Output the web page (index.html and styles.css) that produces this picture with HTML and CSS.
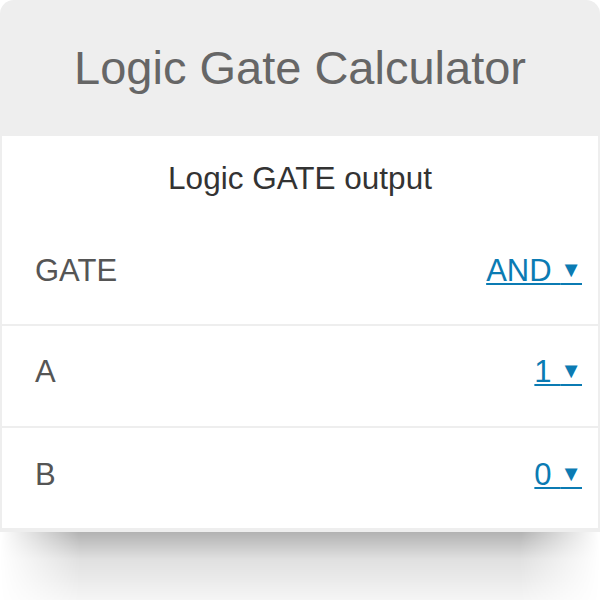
FILE: index.html
```html
<!DOCTYPE html>
<html>

<head>
    <meta charset="UTF-8">
    <title>Logic Gate Calculator</title>
    <link rel="stylesheet" href="styles.css">
</head>

<body>
    <div class="calc">
        <div class="calc-head">Logic Gate Calculator</div>
        <div class="calc-body">
            <div class="caption">Logic GATE output</div>
            <div class="row first">
                <span class="label">GATE</span>
                <a href="javascript:;" class="pick">AND&nbsp;<span class="arrow">▼</span></a>
            </div>
            <div class="row">
                <span class="label">A</span>
                <a href="javascript:;" class="pick">1&nbsp;<span class="arrow">▼</span></a>
            </div>
            <div class="row last">
                <span class="label">B</span>
                <a href="javascript:;" class="pick">0&nbsp;<span class="arrow">▼</span></a>
            </div>
        </div>
    </div>
    <div class="calc-shadow"></div>
</body>

</html>
```

FILE: styles.css
```css
* {
    margin: 0;
    padding: 0;
    list-style: none;
    text-decoration: none;
}

html,
body {
    min-height: 600px;
    background-color: #fff;
}

body {
    font-family: "Liberation Sans", Arial, sans-serif;
}

.calc {
    width: 600px;
    background-color: #eee;
    border-radius: 14px 14px 0 0;
    padding: 0 2px 4px;
    box-sizing: border-box;
}

/* soft shadow under the card */
.calc-shadow {
    height: 68px;
    background: linear-gradient(rgba(0, 0, 0, 0.3), rgba(0, 0, 0, 0.12) 40%, rgba(0, 0, 0, 0.04));
    -webkit-mask-image: linear-gradient(to right, transparent, #000 80px, #000 520px, transparent);
    mask-image: linear-gradient(to right, transparent, #000 80px, #000 520px, transparent);
}

.calc-head {
    height: 136px;
    line-height: 136px;
    text-align: center;
    font-size: 47px;
    color: #666;
}

.calc-body {
    background-color: #fff;
}

.caption {
    height: 84px;
    line-height: 84px;
    text-align: center;
    font-size: 31.5px;
    color: #333;
}

.row {
    display: flex;
    justify-content: space-between;
    align-items: center;
    height: 102px;
    padding: 0 16px 8px 33px;
    box-sizing: border-box;
    border-bottom: solid 2px #eee;
    font-size: 31px;
}

.row.first {
    height: 106px;
    padding-bottom: 2px;
}

.row.last {
    height: 100px;
    padding-bottom: 6px;
    border-bottom: none;
}

.label {
    color: #555;
}

.pick {
    color: #0b7bb3;
    text-decoration: underline;
    text-decoration-thickness: 2px;
    text-underline-offset: 2px;
}

.arrow {
    font-size: 22px;
    vertical-align: 4px;
    text-underline-offset: 1px;
}
```
